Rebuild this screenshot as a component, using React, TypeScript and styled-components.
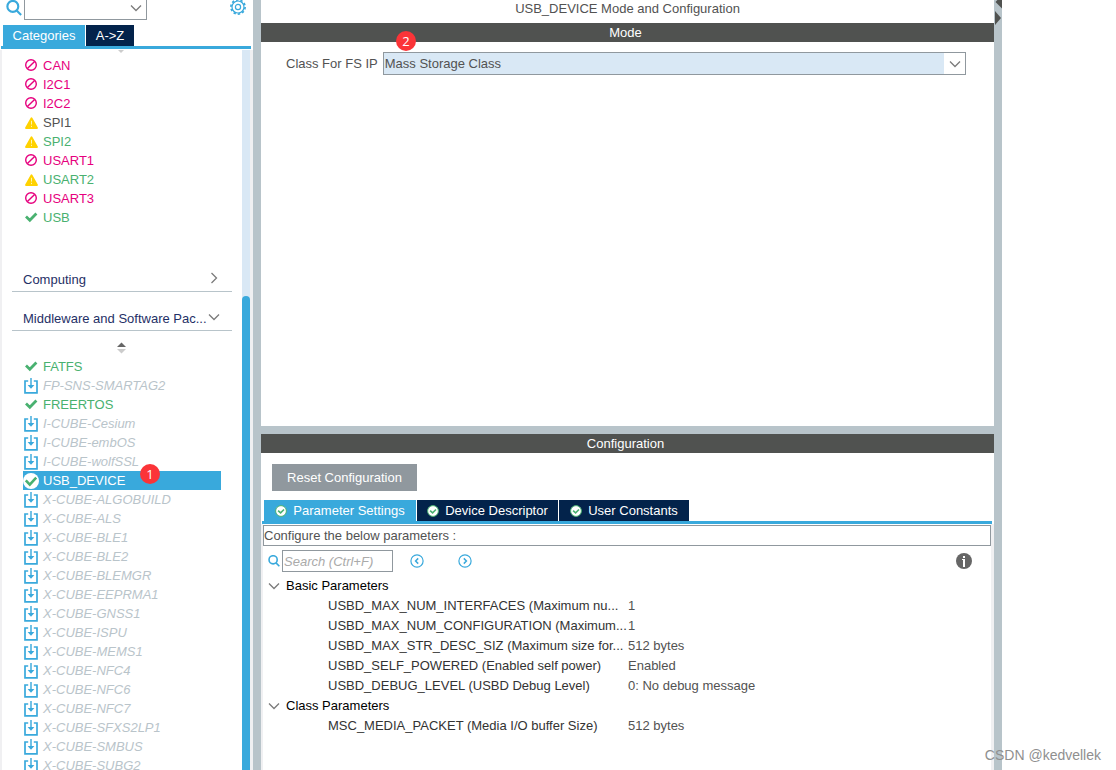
import React from 'react';
import styled, { createGlobalStyle, css } from 'styled-components';

const c = {
  blue: '#39a9dc',
  navy: '#03234b',
  bar: '#505250',
  split: '#b8c4ca',
  text: '#525252',
  green: '#49b170',
  pink: '#e6007e',
  yellow: '#ffd200',
  mute: '#b9c4ca',
  border: '#90989e',
  pale: '#d9e8f5',
  frame: '#f0f0f2',
};

const GlobalStyle = createGlobalStyle`
  * { box-sizing: border-box; }
  body { margin: 0; background: #fff; overflow: hidden; }
  body, button, input, select, table {
    font-family: 'Liberation Sans', Arial, sans-serif;
    font-size: 13px;
    color: ${c.text};
  }
  svg { display: block; flex: none; }
`;

const Page = styled.div`
  position: relative;
  display: grid;
  grid-template-columns: 253px 8px 1fr 8px 114px;
  height: 100vh;
  overflow: hidden;
`;

/* ---------- sidebar ---------- */
const Sidebar = styled.aside`
  display: flex;
  flex-direction: column;
  min-height: 0;
`;

const SearchRow = styled.div`
  display: flex;
  align-items: flex-start;
  height: 25px;
  padding: 0 7px 0 6px;
  gap: 2px;
`;

const Spacer = styled.div`
  flex: 1;
`;

const ComboWrap = styled.div<{ $cropped?: boolean }>`
  display: grid;
  align-items: center;
  background: #fff;
  border: 1px solid ${c.border};
  ${(p) =>
    p.$cropped
      ? css`
          width: 123px;
          height: 20px;
          border-top: 0;
          > svg {
            margin-bottom: 3px;
          }
        `
      : css`
          flex: 1;
          height: 23px;
        `}
  > * {
    grid-area: 1 / 1;
  }
  > svg {
    justify-self: end;
    pointer-events: none;
    margin-right: 4px;
  }
`;

const Combo = styled.select<{ $filled?: boolean }>`
  appearance: none;
  width: 100%;
  height: 100%;
  border: 0;
  outline: 0;
  padding: 0 24px 0 1px;
  border-radius: 0;
  background: ${(p) =>
    p.$filled ? `linear-gradient(to left, #fff 21px, ${c.pale} 21px)` : '#fff'};
`;

const IconButton = styled.button`
  border: 0;
  padding: 0;
  background: none;
  cursor: pointer;
`;

const TabBar = styled.div<{ $inset: number }>`
  display: flex;
  gap: 1px;
  padding-left: ${(p) => p.$inset}px;
  margin: 0 2px 0 1px;
  border-bottom: 3px solid ${c.blue};
`;

const Tab = styled.button<{ $active?: boolean; $width: number }>`
  display: flex;
  align-items: center;
  justify-content: center;
  gap: 6px;
  width: ${(p) => p.$width}px;
  height: 21px;
  border: 0;
  padding: 0;
  color: #fff;
  background: ${(p) => (p.$active ? c.blue : c.navy)};
`;

const SideBody = styled.div`
  display: flex;
  flex: 1;
  min-height: 0;
  margin-top: 1px;
  border-left: 2px solid ${c.frame};
  border-right: 3px solid ${c.frame};
`;

const SideScroll = styled.div`
  flex: 1;
  min-width: 0;
  overflow: hidden;
  padding: 0 10px;
`;

const Track = styled.div`
  display: flex;
  flex-direction: column;
  width: 8px;
  background: ${c.pale};
`;

const Thumb = styled.div`
  flex: 1;
  margin-top: 246px;
  border-radius: 4px 4px 0 0;
  background: ${c.blue};
`;

const SortMark = styled.div<{ $height: number }>`
  display: flex;
  justify-content: center;
  align-items: flex-end;
  height: ${(p) => p.$height}px;
  padding-right: 2px;
`;

const List = styled.ul`
  list-style: none;
  margin: 0;
  padding: 0 11px;
`;

type Kind = 'no' | 'warn' | 'warnGreen' | 'ok' | 'get' | 'selected';

const tone: Record<Kind, string> = {
  no: c.pink,
  warn: c.text,
  warnGreen: c.green,
  ok: c.green,
  get: c.mute,
  selected: '#fff',
};

const Item = styled.li<{ $kind: Kind }>`
  position: relative;
  display: flex;
  align-items: center;
  gap: 4px;
  height: 19px;
  white-space: nowrap;
  color: ${(p) => tone[p.$kind]};
  font-style: ${(p) => (p.$kind === 'get' ? 'italic' : 'normal')};
  background: ${(p) => (p.$kind === 'selected' ? c.blue : 'none')};
`;

const IconSlot = styled.span`
  display: flex;
  justify-content: center;
  width: 16px;
`;

const Section = styled.button<{ $gap: number }>`
  display: flex;
  align-items: center;
  justify-content: space-between;
  width: 100%;
  height: 26px;
  margin-top: ${(p) => p.$gap}px;
  padding: 2px 12px 0 11px;
  border: 0;
  border-bottom: 1px solid ${c.split};
  background: none;
  color: #1f3066;
  text-align: left;
`;

const SectionIcon = styled.span`
  padding-bottom: 4px;
`;

const Badge = styled.span<{ $left: number; $top: number }>`
  position: absolute;
  left: ${(p) => p.$left}px;
  top: ${(p) => p.$top}px;
  width: 20px;
  height: 20px;
  border-radius: 50%;
  background: #fb3438;
  color: #fff;
  font: 13px/20px 'Open Sans', 'Noto Sans', sans-serif;
  text-align: center;
`;

/* ---------- main ---------- */
const Divider = styled.div`
  background: ${c.split};
`;

const Main = styled.main`
  display: flex;
  flex-direction: column;
  min-width: 0;
  min-height: 0;
`;

const Title = styled.h1`
  margin: 0;
  height: 23px;
  font-size: 13px;
  font-weight: 400;
  line-height: 17px;
  text-align: center;
`;

const Bar = styled.h2`
  flex: none;
  margin: 0;
  height: 19px;
  font-size: 13px;
  font-weight: 400;
  line-height: 19px;
  text-align: center;
  color: #fff;
  background: ${c.bar};
  padding-right: 4px;
`;

const ModePanel = styled.section`
  position: relative;
  flex: none;
  height: 384px;
  padding: 10px 28px 0 25px;
`;

const Field = styled.div`
  display: flex;
  align-items: center;
  gap: 5px;
`;

const HSplit = styled.div`
  flex: none;
  height: 8px;
  background: ${c.split};
`;

const ResetButton = styled.button`
  align-self: flex-start;
  width: 145px;
  height: 27px;
  margin: 11px 0 9px 11px;
  border: 0;
  color: #fff;
  background: ${c.border};
`;

const ConfigBody = styled.section`
  flex: 1;
  min-height: 0;
  padding-top: 1px;
  border-left: 2px solid ${c.frame};
  border-right: 3px solid ${c.frame};
`;

const Note = styled.p`
  margin: 0;
  height: 21px;
  border: 1px solid ${c.border};
  line-height: 19px;
`;

const Tools = styled.div`
  display: flex;
  align-items: center;
  height: 30px;
  padding: 0 19px 0 5px;
`;

const SearchInput = styled.input`
  width: 111px;
  height: 22px;
  margin: 0 17px 0 2px;
  padding: 1px 1px 0;
  border: 1px solid ${c.border};
  outline: 0;
  &::placeholder {
    color: #aaa;
    font-style: italic;
    opacity: 1;
  }
`;

const NavButtons = styled.div`
  display: flex;
  gap: 34px;
  flex: 1;
`;

const Tree = styled.table`
  width: 100%;
  table-layout: fixed;
  border-collapse: collapse;
  td,
  th {
    height: 20px;
    padding: 0;
    font-weight: 400;
    text-align: left;
    line-height: 20px;
    white-space: nowrap;
  }
`;

const NameCol = styled.col`
  width: 365px;
`;

const GroupCell = styled.th`
  color: #000;
`;

const GroupLabel = styled.span`
  display: flex;
  align-items: center;
  gap: 6px;
  padding-left: 5px;
`;

const NameCell = styled.td`
  && {
    padding-left: 65px;
  }
  color: #333;
`;

const Watermark = styled.div`
  position: absolute;
  right: 15px;
  bottom: 6px;
  font-size: 14px;
  line-height: 18px;
  color: #8f8f8f;
`;

/* ---------- icons ---------- */
const Search = ({ size }: { size: number }) => (
  <svg width={size} height={size} viewBox="0 0 15 15" fill="none" stroke={c.blue} strokeWidth="2">
    <circle cx="6.4" cy="6" r="5.1" />
    <path d="M10 9.8l4.2 4.2" />
  </svg>
);

const Chevron = ({ right }: { right?: boolean }) => (
  <svg width="12" height="12" viewBox="0 0 12 12" fill="none" stroke="#7b7b7b" strokeWidth="1.3">
    <path d={right ? 'M3.5 1l5 5-5 5' : 'M1 3.5l5 5 5-5'} />
  </svg>
);

const Gear = () => (
  <svg width="16" height="16" viewBox="0 0 16 16" fill="none" stroke={c.blue}>
    <circle cx="8" cy="7" r="7.1" strokeWidth="1.7" strokeDasharray="2.4 2.06" />
    <circle cx="8" cy="7" r="6" strokeWidth="1.2" />
    <circle cx="8" cy="7" r="2.6" strokeWidth="1.2" />
  </svg>
);

const Forbidden = () => (
  <svg width="13" height="13" viewBox="0 0 13 13" fill="none" stroke={c.pink} strokeWidth="1.4">
    <circle cx="6" cy="6" r="5.3" />
    <path d="M2.4 9.6l7.2-7.2" />
  </svg>
);

const Warning = () => (
  <svg width="14" height="12" viewBox="0 0 14 12">
    <path d="M7.5 1.3L13 11H2z" fill={c.yellow} stroke={c.yellow} strokeWidth="1.8" strokeLinejoin="round" />
    <path d="M7.5 3.8v3.8M7.5 8.8v1.3" stroke="#fff3b0" strokeWidth="1" />
  </svg>
);

const Check = () => (
  <svg width="13" height="11" viewBox="0 0 13 11" fill="none" stroke={c.green} strokeWidth="2.8">
    <path d="M1 4.6l3.8 3.6L11.4 1.5" />
  </svg>
);

const CheckDisc = () => (
  <svg width="16" height="16" viewBox="0 0 16 16" fill="none">
    <circle cx="8" cy="8" r="8" fill="#fff" />
    <path d="M2.8 7.4l4 4.2 6.4-7" stroke={c.green} strokeWidth="2.6" />
  </svg>
);

const TabCheck = () => (
  <svg width="12" height="12" viewBox="0 0 12 12" fill="none">
    <circle cx="6" cy="6" r="5.4" fill="#fff" stroke={c.green} strokeWidth="1" />
    <path d="M3.1 5.6l2.5 2.3 3.4-3.4" stroke={c.green} strokeWidth="1.6" />
  </svg>
);

const Download = () => (
  <svg width="14" height="16" viewBox="0 0 14 16" fill="none" stroke={c.blue}>
    <path d="M4.2 3H1v11.8h12V3H9.8" strokeWidth="1.7" />
    <path d="M7 0v9" strokeWidth="1.8" strokeOpacity="0.8" />
    <path d="M3.6 7h6.8L7 10.8z" fill={c.blue} stroke="none" />
  </svg>
);

const Nav = ({ right }: { right?: boolean }) => (
  <svg width="14" height="14" viewBox="0 0 14 14" fill="none" stroke={c.blue}>
    <circle cx="7" cy="7" r="6.1" strokeWidth="1.2" />
    <path d={right ? 'M5.8 4.4L8.4 7 5.8 9.6' : 'M8.2 4.4L5.6 7l2.6 2.6'} strokeWidth="1.5" />
  </svg>
);

const Info = () => (
  <svg width="16" height="16" viewBox="0 0 16 16">
    <circle cx="8" cy="8" r="8" fill="#666" />
    <path d="M7 3h2v2H7zM6 6h3v8H7V7H6z" fill="#fff" />
  </svg>
);

const Collapse = () => (
  <svg width="8" height="26" viewBox="0 0 8 26" fill={c.bar}>
    <path d="M8-5v13.500L1.500 2z" />
    <path d="M1 11v14l6-7z" />
  </svg>
);

const icons: Record<Kind, React.ReactNode> = {
  no: <Forbidden />,
  warn: <Warning />,
  warnGreen: <Warning />,
  ok: <Check />,
  get: <Download />,
  selected: <CheckDisc />,
};

/* ---------- data ---------- */
type Entry = [string, Kind];

const connectivity: Entry[] = [
  ['CAN', 'no'],
  ['I2C1', 'no'],
  ['I2C2', 'no'],
  ['SPI1', 'warn'],
  ['SPI2', 'warnGreen'],
  ['USART1', 'no'],
  ['USART2', 'warnGreen'],
  ['USART3', 'no'],
  ['USB', 'ok'],
];

const middleware: Entry[] = [
  ['FATFS', 'ok'],
  ['FP-SNS-SMARTAG2', 'get'],
  ['FREERTOS', 'ok'],
  ['I-CUBE-Cesium', 'get'],
  ['I-CUBE-embOS', 'get'],
  ['I-CUBE-wolfSSL', 'get'],
  ['USB_DEVICE', 'selected'],
  ['X-CUBE-ALGOBUILD', 'get'],
  ['X-CUBE-ALS', 'get'],
  ['X-CUBE-BLE1', 'get'],
  ['X-CUBE-BLE2', 'get'],
  ['X-CUBE-BLEMGR', 'get'],
  ['X-CUBE-EEPRMA1', 'get'],
  ['X-CUBE-GNSS1', 'get'],
  ['X-CUBE-ISPU', 'get'],
  ['X-CUBE-MEMS1', 'get'],
  ['X-CUBE-NFC4', 'get'],
  ['X-CUBE-NFC6', 'get'],
  ['X-CUBE-NFC7', 'get'],
  ['X-CUBE-SFXS2LP1', 'get'],
  ['X-CUBE-SMBUS', 'get'],
  ['X-CUBE-SUBG2', 'get'],
];

const groups = [
  {
    label: 'Basic Parameters',
    rows: [
      ['USBD_MAX_NUM_INTERFACES (Maximum nu...', '1'],
      ['USBD_MAX_NUM_CONFIGURATION (Maximum...', '1'],
      ['USBD_MAX_STR_DESC_SIZ (Maximum size for...', '512 bytes'],
      ['USBD_SELF_POWERED (Enabled self power)', 'Enabled'],
      ['USBD_DEBUG_LEVEL (USBD Debug Level)', '0: No debug message'],
    ],
  },
  {
    label: 'Class Parameters',
    rows: [['MSC_MEDIA_PACKET (Media I/O buffer Size)', '512 bytes']],
  },
];

const Entries = ({ items }: { items: Entry[] }) => (
  <List>
    {items.map(([name, kind]) => (
      <Item key={name} $kind={kind}>
        <IconSlot>{icons[kind]}</IconSlot>
        {name}
        {kind === 'selected' && (
          <Badge $left={117} $top={-7}>
            1
          </Badge>
        )}
      </Item>
    ))}
  </List>
);

export default function App() {
  return (
    <Page>
      <GlobalStyle />
      <Sidebar>
        <SearchRow>
          <Search size={16} />
          <ComboWrap $cropped>
            <Combo aria-label="Search peripherals" defaultValue="">
              <option value="" />
            </Combo>
            <Chevron />
          </ComboWrap>
          <Spacer />
          <IconButton aria-label="Settings">
            <Gear />
          </IconButton>
        </SearchRow>
        <TabBar $inset={2}>
          <Tab $active $width={82}>
            Categories
          </Tab>
          <Tab $width={48}>{'A->Z'}</Tab>
        </TabBar>
        <SideBody>
          <SideScroll>
            <SortMark $height={6}>
              <svg width="6" height="6" viewBox="0 0 6 6">
                <path d="M0 0h6L3 3z" fill="#ccc" />
              </svg>
            </SortMark>
            <Entries items={connectivity} />
            <Section $gap={39}>
              Computing
              <SectionIcon>
                <Chevron right />
              </SectionIcon>
            </Section>
            <Section $gap={13}>
              Middleware and Software Pac...
              <SectionIcon>
                <Chevron />
              </SectionIcon>
            </Section>
            <SortMark $height={26}>
              <svg width="9" height="15" viewBox="0 0 9 15">
                <path d="M0 5l4.5-4.6L9 5z" fill="#666" />
                <path d="M0 7h9l-4.5 4.6z" fill="#ccc" />
              </svg>
            </SortMark>
            <Entries items={middleware} />
          </SideScroll>
          <Track>
            <Thumb />
          </Track>
        </SideBody>
      </Sidebar>
      <Divider />
      <Main>
        <Title>USB_DEVICE Mode and Configuration</Title>
        <Bar>Mode</Bar>
        <ModePanel>
          <Field>
            <label htmlFor="fs-class">Class For FS IP</label>
            <ComboWrap>
              <Combo id="fs-class" $filled defaultValue="msc">
                <option value="msc">Mass Storage Class</option>
              </Combo>
              <Chevron />
            </ComboWrap>
          </Field>
          <Badge $left={135} $top={-11}>
            2
          </Badge>
        </ModePanel>
        <HSplit />
        <Bar>Configuration</Bar>
        <ResetButton>Reset Configuration</ResetButton>
        <TabBar $inset={2}>
          <Tab $active $width={152}>
            <TabCheck />
            Parameter Settings
          </Tab>
          <Tab $width={141}>
            <TabCheck />
            Device Descriptor
          </Tab>
          <Tab $width={130}>
            <TabCheck />
            User Constants
          </Tab>
        </TabBar>
        <ConfigBody>
          <Note>Configure the below parameters :</Note>
          <Tools>
            <Search size={12} />
            <SearchInput aria-label="Search parameters" placeholder="Search (Ctrl+F)" />
            <NavButtons>
              <IconButton aria-label="Previous match">
                <Nav />
              </IconButton>
              <IconButton aria-label="Next match">
                <Nav right />
              </IconButton>
            </NavButtons>
            <IconButton aria-label="Information">
              <Info />
            </IconButton>
          </Tools>
          <Tree>
            <colgroup>
              <NameCol />
              <col />
            </colgroup>
            {groups.map((g) => (
              <tbody key={g.label}>
                <tr>
                  <GroupCell colSpan={2} scope="rowgroup">
                    <GroupLabel>
                      <Chevron />
                      {g.label}
                    </GroupLabel>
                  </GroupCell>
                </tr>
                {g.rows.map(([name, value]) => (
                  <tr key={name}>
                    <NameCell>{name}</NameCell>
                    <td>{value}</td>
                  </tr>
                ))}
              </tbody>
            ))}
          </Tree>
        </ConfigBody>
      </Main>
      <Divider>
        <Collapse />
      </Divider>
      <Watermark>CSDN @kedvellek</Watermark>
    </Page>
  );
}
